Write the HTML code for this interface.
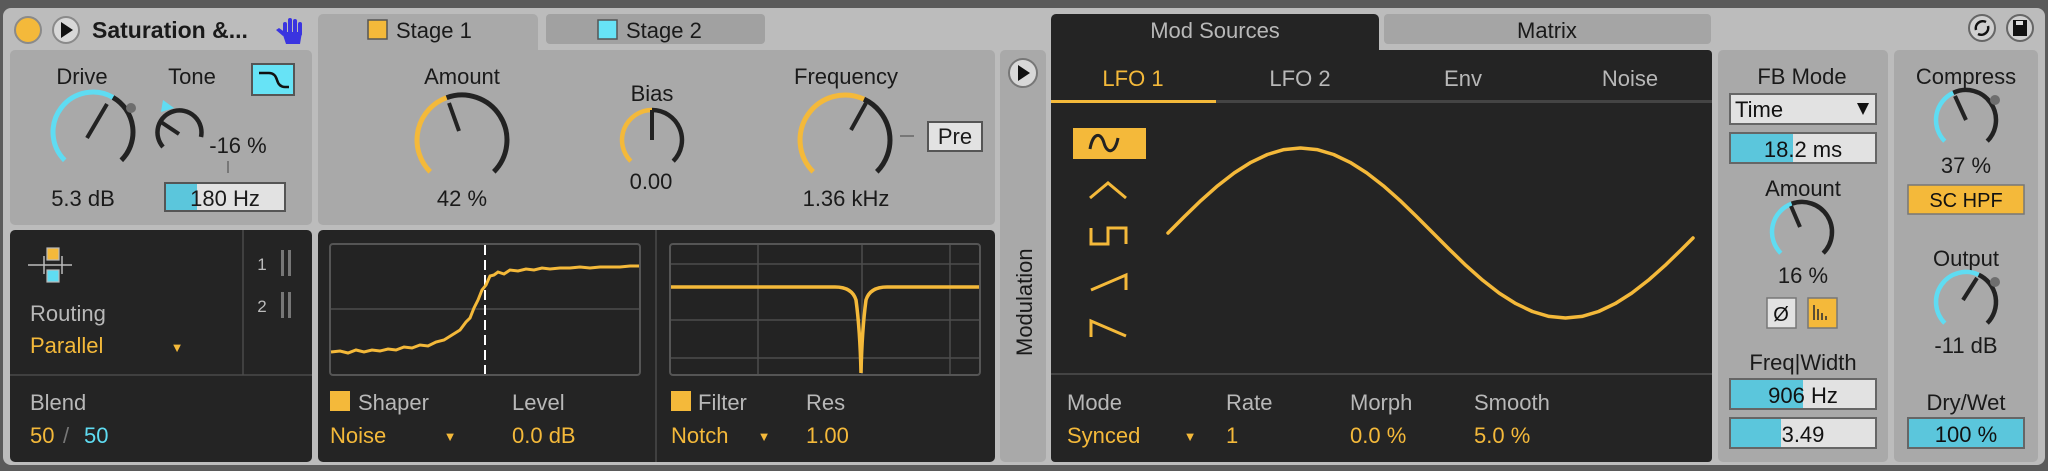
<!DOCTYPE html>
<html><head><meta charset="utf-8"><style>
html,body{margin:0;padding:0;background:#5c5c5c;}
svg{display:block}
text{font-family:"Liberation Sans",sans-serif;}
</style></head><body>
<svg width="2048" height="471" viewBox="0 0 2048 471" xmlns="http://www.w3.org/2000/svg">
<rect x="0" y="0" width="2048" height="471" fill="#5a5a5a"/>
<rect x="3" y="8" width="2042" height="457" rx="8" fill="#bcbcbc"/>
<circle cx="28" cy="30" r="13" fill="#f4b93a" stroke="#8a8a8a" stroke-width="2"/>
<circle cx="66" cy="30" r="13" fill="#d8d8d8" stroke="#8a8a8a" stroke-width="2"/>
<path d="M61 22 L73 30 L61 38Z" fill="#111"/>
<text x="92" y="38" font-size="23" font-weight="bold" fill="#1a1a1a">Saturation &amp;...</text>
<g fill="#3a34e0">
<rect x="283" y="22" width="4" height="14" rx="2"/>
<rect x="288" y="18" width="4" height="18" rx="2"/>
<rect x="293" y="19" width="4" height="17" rx="2"/>
<rect x="298" y="22" width="4" height="14" rx="2"/>
<path d="M282 32 L302 32 L300 44 L286 44 Z"/>
<path d="M283 36 L276 30 L279 28 L286 33Z"/>
</g>
<rect x="10" y="50" width="302" height="175" rx="5" fill="#a9a9a9"/>
<rect x="318" y="14" width="220" height="50" rx="5" fill="#a9a9a9"/>
<rect x="546" y="14" width="219" height="30" rx="4" fill="#a1a1a1"/>
<rect x="368" y="20" width="19" height="19" fill="#f4b93a" stroke="#555" stroke-width="1.5"/>
<text x="396" y="38" font-size="22" fill="#1a1a1a">Stage 1</text>
<rect x="598" y="20" width="19" height="19" fill="#67e3f6" stroke="#555" stroke-width="1.5"/>
<text x="626" y="38" font-size="22" fill="#1a1a1a">Stage 2</text>
<rect x="318" y="50" width="677" height="175" rx="5" fill="#a9a9a9"/>
<text x="82" y="84" font-size="22" fill="#1a1a1a" text-anchor="middle">Drive</text>
<path d="M64.7 160.3 A40 40 0 0 1 113 97.4" fill="none" stroke="#5fdcf2" stroke-width="5"/>
<path d="M113 97.4 A40 40 0 0 1 121.3 160.3" fill="none" stroke="#222" stroke-width="5"/>
<line x1="87" y1="138" x2="107" y2="104" stroke="#222" stroke-width="4"/>
<circle cx="131" cy="108" r="5" fill="#6e6e6e"/>
<text x="83" y="206" font-size="22" fill="#1a1a1a" text-anchor="middle">5.3 dB</text>
<text x="192" y="84" font-size="22" fill="#1a1a1a" text-anchor="middle">Tone</text>
<path d="M163 147 A22 22 0 1 1 201 137" fill="none" stroke="#222" stroke-width="4.5"/>
<line x1="179" y1="134" x2="161" y2="122" stroke="#222" stroke-width="4"/>
<path d="M163 100 L174 108 L161 112Z" fill="#5fdcf2"/>
<text x="238" y="153" font-size="22" fill="#1a1a1a" text-anchor="middle">-16 %</text>
<line x1="228" y1="161" x2="228" y2="173" stroke="#777" stroke-width="2"/>
<rect x="252" y="64" width="42" height="31" fill="#67e3f6" stroke="#555" stroke-width="2"/>
<path d="M259 73 L269 73 Q275 73 277 80 Q279 87 285 87 L289 87" fill="none" stroke="#111" stroke-width="2.5"/>
<rect x="165" y="183" width="120" height="28" fill="#e2e2e2" stroke="#555" stroke-width="2"/>
<rect x="166" y="184" width="31" height="26" fill="#5bc6dc"/>
<text x="225" y="206" font-size="22" fill="#1a1a1a" text-anchor="middle">180 Hz</text>
<text x="462" y="84" font-size="22" fill="#1a1a1a" text-anchor="middle">Amount</text>
<path d="M430.2 171.8 A45 45 0 0 1 446.6 97.7" fill="none" stroke="#f4b93a" stroke-width="5"/>
<path d="M446.6 97.7 A45 45 0 0 1 493.8 171.8" fill="none" stroke="#222" stroke-width="5"/>
<line x1="459" y1="131" x2="449" y2="103" stroke="#222" stroke-width="4"/>
<text x="462" y="206" font-size="22" fill="#1a1a1a" text-anchor="middle">42 %</text>
<text x="652" y="101" font-size="22" fill="#1a1a1a" text-anchor="middle">Bias</text>
<path d="M630.8 161.2 A30 30 0 0 1 652 110" fill="none" stroke="#f4b93a" stroke-width="4.5"/>
<path d="M652 110 A30 30 0 0 1 673.2 161.2" fill="none" stroke="#222" stroke-width="4.5"/>
<line x1="652" y1="140" x2="652" y2="110" stroke="#222" stroke-width="4"/>
<text x="651" y="189" font-size="22" fill="#1a1a1a" text-anchor="middle">0.00</text>
<text x="846" y="84" font-size="22" fill="#1a1a1a" text-anchor="middle">Frequency</text>
<path d="M813.2 171.8 A45 45 0 0 1 864 99.2" fill="none" stroke="#f4b93a" stroke-width="5"/>
<path d="M864 99.2 A45 45 0 0 1 876.8 171.8" fill="none" stroke="#222" stroke-width="5"/>
<line x1="851" y1="130" x2="866" y2="103" stroke="#222" stroke-width="4"/>
<text x="846" y="206" font-size="22" fill="#1a1a1a" text-anchor="middle">1.36 kHz</text>
<line x1="900" y1="136" x2="914" y2="136" stroke="#777" stroke-width="2"/>
<rect x="928" y="122" width="54" height="29" fill="#e2e2e2" stroke="#555" stroke-width="2"/>
<text x="955" y="144" font-size="22" fill="#1a1a1a" text-anchor="middle">Pre</text>
<rect x="10" y="230" width="302" height="232" rx="5" fill="#242424"/>
<line x1="243" y1="230" x2="243" y2="375" stroke="#4a4a4a" stroke-width="1.5"/>
<line x1="10" y1="375" x2="312" y2="375" stroke="#4a4a4a" stroke-width="1.5"/>
<line x1="28" y1="265" x2="72" y2="265" stroke="#bbb" stroke-width="1.5"/>
<line x1="44" y1="256" x2="44" y2="274" stroke="#bbb" stroke-width="1.5"/>
<line x1="62" y1="256" x2="62" y2="274" stroke="#bbb" stroke-width="1.5"/>
<rect x="47" y="248" width="12" height="12" fill="#f4b93a" stroke="#bbb" stroke-width="1.2"/>
<rect x="47" y="270" width="12" height="12" fill="#5fdcf2" stroke="#bbb" stroke-width="1.2"/>
<text x="262" y="270" font-size="17" fill="#bbb" text-anchor="middle">1</text>
<rect x="281" y="250" width="3" height="26" fill="#777"/><rect x="288" y="250" width="3" height="26" fill="#777"/>
<text x="262" y="312" font-size="17" fill="#bbb" text-anchor="middle">2</text>
<rect x="281" y="292" width="3" height="26" fill="#777"/><rect x="288" y="292" width="3" height="26" fill="#777"/>
<text x="30" y="321" font-size="22" fill="#b8b8b8">Routing</text>
<text x="30" y="353" font-size="22" fill="#f4b93a">Parallel</text>
<text x="177" y="352" font-size="13" fill="#f4b93a" text-anchor="middle">▼</text>
<text x="30" y="410" font-size="22" fill="#b8b8b8">Blend</text>
<text x="30" y="443" font-size="22" fill="#f4b93a">50</text>
<text x="63" y="443" font-size="22" fill="#777">/</text>
<text x="84" y="443" font-size="22" fill="#5fdcf2">50</text>
<rect x="318" y="230" width="677" height="232" rx="5" fill="#242424"/>
<line x1="656" y1="230" x2="656" y2="462" stroke="#4a4a4a" stroke-width="1.5"/>
<rect x="330" y="244" width="310" height="131" rx="3" fill="#232323" stroke="#555" stroke-width="2"/>
<line x1="331" y1="309" x2="639" y2="309" stroke="#4d4d4d" stroke-width="1.5"/>
<line x1="485" y1="245" x2="485" y2="374" stroke="#fff" stroke-width="2" stroke-dasharray="10 5"/>
<polyline fill="none" stroke="#f4b93a" stroke-width="3" points="331,352 340,351 348,353 356,350 364,352 372,350 380,351 388,349 396,350 404,347 412,348 420,345 428,346 436,342 444,340 452,335 460,330 466,322 470,318 474,308 478,300 482,290 486,285 490,276 494,275 498,272 504,274 510,270 518,271 526,269 534,270 542,268 550,269 560,268 570,268 580,267 590,268 600,267 610,267 620,267 630,266 639,266"/>
<rect x="670" y="244" width="310" height="131" rx="3" fill="#232323" stroke="#555" stroke-width="2"/>
<g stroke="#4d4d4d" stroke-width="1.5">
<line x1="671" y1="264" x2="979" y2="264"/><line x1="671" y1="320" x2="979" y2="320"/><line x1="671" y1="358" x2="979" y2="358"/>
<line x1="758" y1="245" x2="758" y2="374"/><line x1="862" y1="245" x2="862" y2="374"/><line x1="950" y1="245" x2="950" y2="374"/>
</g>
<path d="M671 287 L835 287 Q852 287 856 300 Q860 330 861 373 Q862 330 866 300 Q870 287 887 287 L979 287" fill="none" stroke="#f4b93a" stroke-width="3.5"/>
<rect x="330" y="391" width="20" height="20" fill="#f4b93a"/>
<text x="358" y="410" font-size="22" fill="#b8b8b8">Shaper</text>
<text x="512" y="410" font-size="22" fill="#b8b8b8">Level</text>
<text x="330" y="443" font-size="22" fill="#f4b93a">Noise</text>
<text x="450" y="441" font-size="13" fill="#f4b93a" text-anchor="middle">▼</text>
<text x="512" y="443" font-size="22" fill="#f4b93a">0.0 dB</text>
<rect x="671" y="391" width="20" height="20" fill="#f4b93a"/>
<text x="698" y="410" font-size="22" fill="#b8b8b8">Filter</text>
<text x="806" y="410" font-size="22" fill="#b8b8b8">Res</text>
<text x="671" y="443" font-size="22" fill="#f4b93a">Notch</text>
<text x="764" y="441" font-size="13" fill="#f4b93a" text-anchor="middle">▼</text>
<text x="806" y="443" font-size="22" fill="#f4b93a">1.00</text>
<rect x="1000" y="50" width="46" height="412" rx="5" fill="#a9a9a9"/>
<circle cx="1023" cy="73" r="14" fill="#d8d8d8" stroke="#777" stroke-width="2"/>
<path d="M1018 65 L1030 73 L1018 81Z" fill="#111"/>
<text transform="translate(1032,356) rotate(-90)" font-size="22" fill="#1a1a1a">Modulation</text>
<rect x="1051" y="14" width="328" height="50" rx="5" fill="#242424"/>
<rect x="1384" y="14" width="327" height="30" rx="4" fill="#a5a5a5"/>
<text x="1215" y="38" font-size="22" fill="#b8b8b8" text-anchor="middle">Mod Sources</text>
<text x="1547" y="38" font-size="22" fill="#1a1a1a" text-anchor="middle">Matrix</text>
<rect x="1051" y="50" width="661" height="412" rx="4" fill="#242424"/>
<text x="1133" y="86" font-size="22" fill="#f4b93a" text-anchor="middle">LFO 1</text>
<text x="1300" y="86" font-size="22" fill="#b8b8b8" text-anchor="middle">LFO 2</text>
<text x="1463" y="86" font-size="22" fill="#b8b8b8" text-anchor="middle">Env</text>
<text x="1630" y="86" font-size="22" fill="#b8b8b8" text-anchor="middle">Noise</text>
<rect x="1051" y="100" width="661" height="3" fill="#444"/>
<rect x="1051" y="100" width="165" height="3" fill="#f4b93a"/>
<rect x="1073" y="128" width="73" height="31" fill="#f4b93a"/>
<path d="M1090 149 C1093 132 1101 132 1104 143 C1107 154 1115 154 1118 138" fill="none" stroke="#222" stroke-width="3"/>
<g fill="none" stroke="#f4b93a" stroke-width="3">
<path d="M1090 198 L1108 183 L1126 198"/>
<path d="M1091 228 L1091 244 L1108 244 L1108 228 L1126 228 L1126 244"/>
<path d="M1091 290 L1126 275 L1126 290"/>
<path d="M1091 337 L1091 321 L1126 336"/>
</g>
<polyline fill="none" stroke="#f4b93a" stroke-width="3.5" stroke-linejoin="round" stroke-linecap="round" points="1168,233 1184.6,216.4 1201.1,200.4 1217.7,185.7 1234.3,172.9 1250.8,162.4 1267.4,154.5 1283.9,149.6 1300.5,148 1317,149.6 1333.6,154.5 1350.2,162.4 1366.7,172.9 1383.3,185.7 1399.9,200.4 1416.4,216.4 1433,233 1449.6,249.6 1466.1,265.6 1482.7,280.3 1499.2,293.1 1515.8,303.6 1532.4,311.5 1548.9,316.4 1565.5,318 1582,316.4 1598.6,311.5 1615.2,303.6 1631.7,293.1 1648.3,280.3 1664.9,265.6 1681.4,249.6 1693,238"/>
<rect x="1051" y="373" width="661" height="2" fill="#444"/>
<text x="1067" y="410" font-size="22" fill="#b8b8b8">Mode</text>
<text x="1226" y="410" font-size="22" fill="#b8b8b8">Rate</text>
<text x="1350" y="410" font-size="22" fill="#b8b8b8">Morph</text>
<text x="1474" y="410" font-size="22" fill="#b8b8b8">Smooth</text>
<text x="1067" y="443" font-size="22" fill="#f4b93a">Synced</text>
<text x="1190" y="441" font-size="13" fill="#f4b93a" text-anchor="middle">▼</text>
<text x="1226" y="443" font-size="22" fill="#f4b93a">1</text>
<text x="1350" y="443" font-size="22" fill="#f4b93a">0.0 %</text>
<text x="1474" y="443" font-size="22" fill="#f4b93a">5.0 %</text>
<circle cx="1982" cy="28" r="13" fill="#d0d0d0" stroke="#666" stroke-width="2"/>
<path d="M1976 30 A7 7 0 0 1 1986 22 M1988 26 A7 7 0 0 1 1978 34" fill="none" stroke="#111" stroke-width="2.5"/>
<circle cx="2020" cy="28" r="13" fill="#d0d0d0" stroke="#666" stroke-width="2"/>
<rect x="2013" y="20" width="14" height="16" fill="#111"/><rect x="2016" y="21" width="7" height="4" fill="#ddd"/>
<rect x="1718" y="50" width="170" height="412" rx="5" fill="#a9a9a9"/>
<text x="1802" y="84" font-size="22" fill="#1a1a1a" text-anchor="middle">FB Mode</text>
<rect x="1730" y="94" width="146" height="30" fill="#e2e2e2" stroke="#666" stroke-width="2"/>
<text x="1735" y="117" font-size="22" fill="#111">Time</text>
<path d="M1857 103 L1869 103 L1863 115Z" fill="#111"/>
<rect x="1730" y="133" width="146" height="30" fill="#e2e2e2" stroke="#666" stroke-width="2"/>
<rect x="1731" y="134" width="62" height="28" fill="#5bc6dc"/>
<text x="1803" y="157" font-size="22" fill="#111" text-anchor="middle">18.2 ms</text>
<text x="1803" y="196" font-size="22" fill="#1a1a1a" text-anchor="middle">Amount</text>
<path d="M1780.8 253.2 A30 30 0 0 1 1791.7 203.8" fill="none" stroke="#5fdcf2" stroke-width="4.5"/>
<path d="M1791.7 203.8 A30 30 0 0 1 1823.2 253.2" fill="none" stroke="#222" stroke-width="4.5"/>
<line x1="1800" y1="227" x2="1791" y2="206" stroke="#222" stroke-width="4"/>
<text x="1803" y="283" font-size="22" fill="#1a1a1a" text-anchor="middle">16 %</text>
<rect x="1767" y="298" width="29" height="30" fill="#e2e2e2" stroke="#777" stroke-width="1.5"/>
<text x="1781" y="321" font-size="20" fill="#111" text-anchor="middle">Ø</text>
<rect x="1808" y="298" width="29" height="30" fill="#f4b93a" stroke="#777" stroke-width="1.5"/>
<g stroke="#333" stroke-width="1.6"><line x1="1814" y1="305" x2="1814" y2="320"/><line x1="1818" y1="309" x2="1818" y2="320"/><line x1="1822" y1="313" x2="1822" y2="320"/><line x1="1826" y1="316" x2="1826" y2="320"/></g>
<text x="1803" y="370" font-size="22" fill="#1a1a1a" text-anchor="middle">Freq|Width</text>
<rect x="1730" y="379" width="146" height="30" fill="#e2e2e2" stroke="#666" stroke-width="2"/>
<rect x="1731" y="380" width="72" height="28" fill="#5bc6dc"/>
<text x="1803" y="403" font-size="22" fill="#111" text-anchor="middle">906 Hz</text>
<rect x="1730" y="418" width="146" height="30" fill="#e2e2e2" stroke="#666" stroke-width="2"/>
<rect x="1731" y="419" width="50" height="28" fill="#5bc6dc"/>
<text x="1803" y="442" font-size="22" fill="#111" text-anchor="middle">3.49</text>
<rect x="1894" y="50" width="144" height="412" rx="5" fill="#a9a9a9"/>
<text x="1966" y="84" font-size="22" fill="#1a1a1a" text-anchor="middle">Compress</text>
<path d="M1944.8 141.2 A30 30 0 0 1 1953.3 92.8" fill="none" stroke="#5fdcf2" stroke-width="4.5"/>
<path d="M1953.3 92.8 A30 30 0 0 1 1987.2 141.2" fill="none" stroke="#222" stroke-width="4.5"/>
<line x1="1966" y1="120" x2="1955" y2="96" stroke="#222" stroke-width="4"/>
<circle cx="1995" cy="100" r="5" fill="#6e6e6e"/>
<text x="1966" y="173" font-size="22" fill="#1a1a1a" text-anchor="middle">37 %</text>
<rect x="1908" y="185" width="116" height="29" fill="#f4b93a" stroke="#777" stroke-width="1.5"/>
<text x="1966" y="207" font-size="20" fill="#111" text-anchor="middle">SC HPF</text>
<text x="1966" y="266" font-size="22" fill="#1a1a1a" text-anchor="middle">Output</text>
<path d="M1944.8 323.2 A30 30 0 0 1 1978.7 274.8" fill="none" stroke="#5fdcf2" stroke-width="4.5"/>
<path d="M1978.7 274.8 A30 30 0 0 1 1987.2 323.2" fill="none" stroke="#222" stroke-width="4.5"/>
<line x1="1963" y1="300" x2="1977" y2="278" stroke="#222" stroke-width="4"/>
<circle cx="1995" cy="282" r="5" fill="#6e6e6e"/>
<text x="1966" y="353" font-size="22" fill="#1a1a1a" text-anchor="middle">-11 dB</text>
<text x="1966" y="410" font-size="22" fill="#1a1a1a" text-anchor="middle">Dry/Wet</text>
<rect x="1908" y="418" width="116" height="30" fill="#5bc6dc" stroke="#666" stroke-width="2"/>
<text x="1966" y="442" font-size="22" fill="#111" text-anchor="middle">100 %</text>
</svg>
</body></html>
